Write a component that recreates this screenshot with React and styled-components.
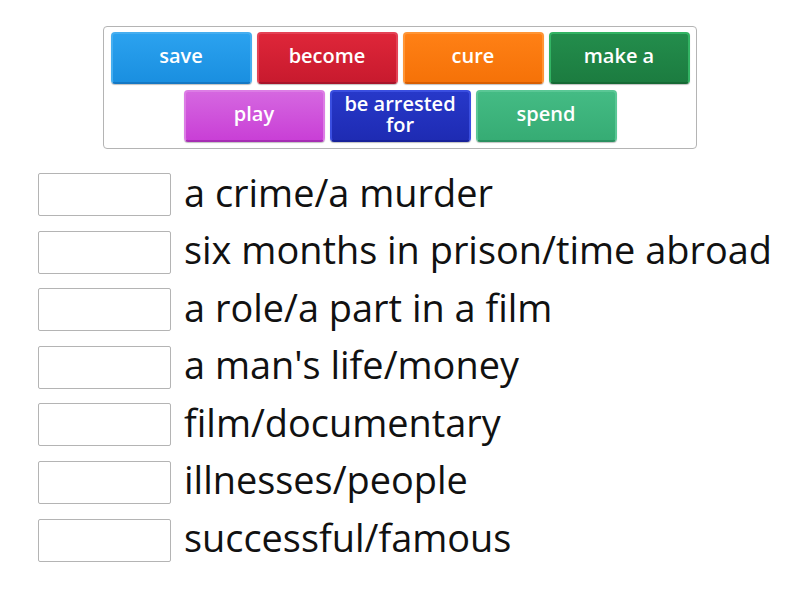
import React from "react";
import styled, { createGlobalStyle } from "styled-components";

const GlobalStyle = createGlobalStyle`
  body {
    margin: 0;
    background: #ffffff;
    font-family: "Open Sans", "Noto Sans", sans-serif;
  }
`;

const Page = styled.div`
  width: 800px;
  height: 600px;
  display: flex;
  flex-direction: column;
  align-items: center;
  padding-top: 26px;
  box-sizing: border-box;
`;

const Bank = styled.div`
  width: 594px;
  box-sizing: border-box;
  border: 1px solid #b4b4b4;
  border-radius: 4px;
  padding: 5px 6px 6px;
  display: flex;
  flex-wrap: wrap;
  justify-content: center;
  gap: 6px 5px;
`;

const Tile = styled.div`
  width: 141px;
  height: 52px;
  box-sizing: border-box;
  border-radius: 4px;
  border: 2px solid ${(p) => p.$light};
  border-bottom-color: ${(p) => p.$dark};
  background: linear-gradient(${(p) => p.$top}, ${(p) => p.$bottom});
  box-shadow: 0 1px 1px rgba(0, 0, 0, 0.25);
  color: #ffffff;
  font-weight: 600;
  font-size: 20px;
  line-height: 21px;
  display: flex;
  align-items: center;
  justify-content: center;
  text-align: center;
  padding: 0 4px 5px;
`;

const Answers = styled.div`
  width: 800px;
  padding-left: 38px;
  box-sizing: border-box;
  margin-top: 24px;
  display: flex;
  flex-direction: column;
  gap: 14.6px;
`;

const Row = styled.div`
  display: flex;
  align-items: center;
  gap: 13px;
  height: 43px;
`;

const Slot = styled.div`
  width: 133px;
  height: 43px;
  box-sizing: border-box;
  border: 1px solid #b4b4b4;
  border-radius: 2px;
  flex-shrink: 0;
`;

const Clue = styled.div`
  font-size: 37.9px;
  color: #111111;
  white-space: nowrap;
  line-height: 43px;
  margin-bottom: 5px;
`;

const tiles = [
  { text: "save", top: "#2ba2ef", bottom: "#1a8fe0", light: "#45aef0", dark: "#1478c4" },
  { text: "become", top: "#de2639", bottom: "#c81a2e", light: "#e44255", dark: "#a8142a" },
  { text: "cure", top: "#ff8015", bottom: "#f57208", light: "#ff9535", dark: "#d95e00" },
  { text: "make a", top: "#238d4c", bottom: "#1c7c40", light: "#32b363", dark: "#166a35" },
  { text: "play", top: "#d567e0", bottom: "#c93fd6", light: "#dc7de5", dark: "#a62eb3" },
  { text: "be arrested for", top: "#2738c9", bottom: "#1e2bb3", light: "#3a4ee0", dark: "#18229a" },
  { text: "spend", top: "#44bb84", bottom: "#36ac74", light: "#5ac795", dark: "#2a9060" },
];

const clues = [
  "a crime/a murder",
  "six months in prison/time abroad",
  "a role/a part in a film",
  "a man's life/money",
  "film/documentary",
  "illnesses/people",
  "successful/famous",
];

export default function App() {
  return (
    <>
      <GlobalStyle />
      <Page>
        <Bank>
          {tiles.map((t) => (
            <Tile
              key={t.text}
              $top={t.top}
              $bottom={t.bottom}
              $light={t.light}
              $dark={t.dark}
            >
              {t.text}
            </Tile>
          ))}
        </Bank>
        <Answers>
          {clues.map((c) => (
            <Row key={c}>
              <Slot />
              <Clue>{c}</Clue>
            </Row>
          ))}
        </Answers>
      </Page>
    </>
  );
}
